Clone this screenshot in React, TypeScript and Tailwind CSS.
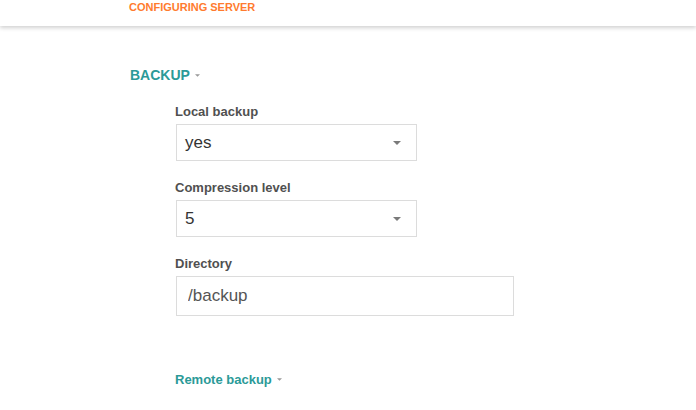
const Caret = ({ className }: { className: string }) => (
  <svg viewBox="0 0 8 4" className={className} fill="currentColor">
    <path d="M0 0h8L4 4z" />
  </svg>
);

const SelectBox = ({ value }: { value: string }) => (
  <div className="ml-px flex h-[37px] w-[241px] items-center justify-between border border-[#dcdcdc] bg-white pl-[8px] pr-[15px]">
    <span className="text-[17px] leading-[17px] text-[#333]">{value}</span>
    <Caret className="h-[4px] w-[8px] text-[#7a7a7a]" />
  </div>
);

const Label = ({ children }: { children: string }) => (
  <div className="mb-[6px] text-[13px] font-bold leading-[13px] text-[#505050]">{children}</div>
);

export default function App() {
  return (
    <div className="min-h-[410px] w-full bg-white font-['Liberation_Sans',Arial,sans-serif]">
      <header className="relative h-[26px] bg-white shadow-[0_2px_4px_rgba(0,0,0,0.18)]">
        <div className="pl-[129px] pt-[2px] text-[11px] font-bold leading-[11px] text-[#ff7b2e]">
          CONFIGURING SERVER
        </div>
      </header>

      <main className="pl-[130px] pt-[42px]">
        <div className="flex items-center text-[14px] font-bold leading-[14px] text-[#2b9a98]">
          BACKUP
          <Caret className="ml-[5px] h-[3px] w-[5px] text-[#9a9a9a]" />
        </div>

        <div className="pl-[45px] pt-[23px]">
          <Label>Local backup</Label>
          <SelectBox value="yes" />

          <div className="mt-[20px]">
            <Label>Compression level</Label>
            <SelectBox value="5" />
          </div>

          <div className="mt-[20px]">
            <Label>Directory</Label>
            <input
              defaultValue="/backup"
              className="ml-px h-[40px] w-[338px] border border-[#dcdcdc] bg-white px-[11px] font-['Liberation_Sans',Arial,sans-serif] text-[17px] text-[#555] outline-none"
            />
          </div>

          <div className="mt-[57px] flex items-center text-[13px] font-bold leading-[13px] text-[#2b9a98]">
            Remote backup
            <Caret className="ml-[5px] h-[3px] w-[5px] text-[#9a9a9a]" />
          </div>
        </div>
      </main>
    </div>
  );
}
